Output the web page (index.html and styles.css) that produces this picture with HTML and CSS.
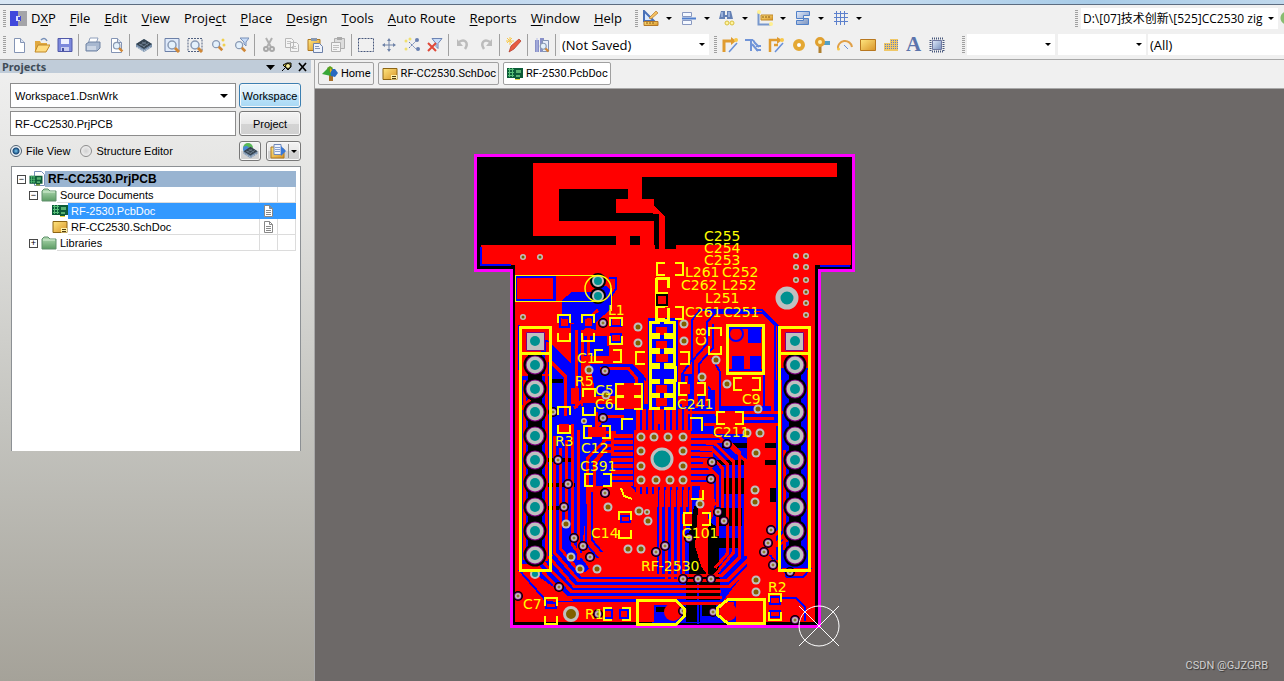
FILE: index.html
```html
<!DOCTYPE html>
<html lang="en">
<head>
  <meta charset="UTF-8" />
  <meta name="viewport" content="width=device-width, initial-scale=1.0"/>
  <title>DXP - RF-2530.PcbDoc</title>
  <link rel="stylesheet" href="styles.css">
</head>
<body>
  <!-- shared icons -->
  <svg class="defs" aria-hidden="true">
    <defs>
      <linearGradient id="gold" x2="1" y2="1"><stop offset="0" stop-color="#ffe680"/><stop offset="1" stop-color="#d89428"/></linearGradient>
      <linearGradient id="steel" x2="1" y2="1"><stop offset="0" stop-color="#dfe9fb"/><stop offset="1" stop-color="#7890bc"/></linearGradient>
      <linearGradient id="green" x2="0" y2="1"><stop offset="0" stop-color="#b4dcb4"/><stop offset="1" stop-color="#5c9c64"/></linearGradient>
      <symbol id="i-lens" viewBox="0 0 16 16"><circle cx="7" cy="7" r="4" fill="#e4f1fc" stroke="#8a9ab4" stroke-width="1.5"/><path d="M10 10l4 4" stroke="#d08838" stroke-width="3"/></symbol>
      <symbol id="i-page" viewBox="0 0 16 16"><path d="M3.500 1.500h6l4 4v10h-10z" fill="#fff" stroke="#8494b4"/><path d="M9.500 1.500v4h4" fill="#dce4f2" stroke="#8494b4"/></symbol>
      <symbol id="i-chip" viewBox="0 0 16 16"><path d="M0 7l8-5 8 5v3l-8 5-8-5z" fill="#7890ac"/><path d="M0 7l8-5 8 5-8 5z" fill="#34424e"/><path d="M3 7l6 3M6 5l6 3M4 8l6-3M7 10l6-4" stroke="#76889a" stroke-width=".8"/><path d="M1 10l7 4 7-4" stroke="#dce6ee" stroke-dasharray="1 1" fill="none"/></symbol>
      <symbol id="i-pcb" viewBox="0 0 16 16"><path d="M0 2h16v10h-3v2H8v-2H0z" fill="#0c5c38"/><path d="M1 3.500h6M1 6.500h6M1 9.500h6M2.500 2v9M5.500 2v9" stroke="#58c078"/><path d="M9 4h5v3H9zM9 9h4v2H9z" fill="#58b070"/><path d="M8 13.500h5" stroke="#e8d840"/></symbol>
      <symbol id="i-sch" viewBox="0 0 16 16"><path d="M1 2.500h14v11H1z" fill="url(#gold)" stroke="#8c6414"/><path d="M9 9h6v4.500H9z" fill="#fff0a8"/><path d="M10 10.500h4M10 12.500h4" stroke="#503c10"/></symbol>
      <symbol id="i-folder" viewBox="0 0 16 16"><path d="M1 4l2-2h4l2 2h6v10H1z" fill="url(#green)" stroke="#60906c"/><path d="M2 5h12" stroke="#d8f0d8"/></symbol>
      <symbol id="i-doc" viewBox="0 0 10 12"><path d="M.500.500h5l3 3v8h-8zM5.500.500v3h3M2 5.500h5M2 7.500h5M2 9.500h5" fill="#fff" stroke="#888"/></symbol>
    </defs>
  </svg>

  <div class="titlebar"></div>

  <header class="toolbars">
    <div class="bar">
      <span class="grip"></span>
      <svg class="logo" viewBox="0 0 17 17"><path d="M0 1h9v5h2v5H9v5H0z" fill="#4048dc"/><path d="M8 1h9v15H8v-5h3V6H8z" fill="#a4a4a8"/><path d="M6 6h4v5H6z" fill="#d8dcff"/><path d="M8 7h3v3H8z" fill="#4048dc"/></svg>
      <nav class="menu">
        <button>D<u>X</u>P</button>
        <button><u>F</u>ile</button>
        <button><u>E</u>dit</button>
        <button><u>V</u>iew</button>
        <button>Proje<u>c</u>t</button>
        <button><u>P</u>lace</button>
        <button><u>D</u>esign</button>
        <button><u>T</u>ools</button>
        <button><u>A</u>uto Route</button>
        <button><u>R</u>eports</button>
        <button><u>W</u>indow</button>
        <button><u>H</u>elp</button>
      </nav>
      <span class="grip"></span>
      <div class="drops">
        <button aria-label="Utilities"><svg viewBox="0 0 16 16"><path d="M1 1v10h10z" fill="#d8e8ff" stroke="#4870b8" stroke-width="2"/><path d="M6 8l7-7 2 2-7 6z" fill="#f4c060" stroke="#b47828" stroke-width=".7"/><path d="M1 11.500h14v4H1z" fill="url(#gold)" stroke="#b47828"/><path d="M4 12v2M7 12v2M10 12v2" stroke="#885818"/></svg></button>
        <button aria-label="Align"><svg viewBox="0 0 16 16"><path d="M1.500 2.500h9v4h-9zM1.500 10.500h9v4h-9z" fill="#f4f8ff" stroke="#8898c0"/><path d="M1 8.500h14" stroke="#5080d0" stroke-width="2"/></svg></button>
        <button aria-label="Find selections"><svg viewBox="0 0 16 16"><path d="M2 1h4v4h2V1h4l2 8H8V7H6v2H0z" fill="#6480b4"/><path d="M3 2v5M10 2v5" stroke="#c8dcff"/><circle cx="8" cy="13" r="2" fill="#fff4a0" stroke="#d8c040"/><circle cx="13" cy="13" r="2" fill="#fff4a0" stroke="#d8c040"/></svg></button>
        <button aria-label="Dimensions"><svg viewBox="0 0 16 16"><path d="M1.500 2v12.500H14" fill="none" stroke="#7898cc" stroke-width="2"/><path d="M4 5h12v5H4z" fill="url(#gold)" stroke="#c08828"/><path d="M6 6v2M9 6v2M12 6v2" stroke="#885818"/><circle cx="2" cy="2" r="2" fill="#fff090"/><circle cx="14" cy="14" r="2" fill="#fff090"/></svg></button>
        <button aria-label="Rooms"><svg viewBox="0 0 16 16"><path d="M1.500 1.500h13v4h-6v3h-7zM8.500 8.500h5v6h-12v-4h7z" fill="url(#steel)" stroke="#5080c8"/></svg></button>
        <button aria-label="Grids"><svg viewBox="0 0 16 16"><path d="M3.500 1v14M7.500 1v14M11.500 1v14M1 3.500h14M1 7.500h14M1 11.500h14" stroke="#5c80cc"/></svg></button>
      </div>
      <div class="path-box">
        <span class="grip"></span>
        <span class="combo path"><select aria-label="Document path"><option>D:\[07]技术创新\[525]CC2530 zig</option></select></span>
        <span class="go"></span>
      </div>
    </div>

    <div class="bar">
      <span class="grip"></span>
      <div class="tools">
        <button aria-label="New"><svg viewBox="0 0 16 16"><use href="#i-page"/></svg></button>
        <button aria-label="Open"><svg viewBox="0 0 16 16"><path d="M1 4h5l1 2h6v8H1z" fill="#e0a840"/><path d="M1 15l3-7h12l-4 7z" fill="#ffdc80" stroke="#c08828"/><path d="M7 3c3-3 5-1 6 1" fill="none" stroke="#7890b8" stroke-width="1.500"/></svg></button>
        <button aria-label="Save"><svg viewBox="0 0 16 16"><path d="M1 1.500h14v13H1z" fill="#7c88dc" stroke="#5058a8"/><path d="M4 2h8v5H4z" fill="#eef0ff"/><path d="M4 10h8v4H4z" fill="#c8ccf0"/><path d="M5 11h2v3H5z" fill="#4450a0"/></svg></button>
        <i class="sep"></i>
        <button aria-label="Print"><svg viewBox="0 0 16 16"><path d="M5 1h8l-2 6H3z" fill="#fff" stroke="#90a0bc"/><path d="M1 7l3-2h11v6l-3 3H1z" fill="#a8b8d0" stroke="#7084a4"/><path d="M2 10h9M2 12h9" stroke="#f0f4fa"/></svg></button>
        <button aria-label="Print preview"><svg viewBox="0 0 16 16"><use href="#i-page"/><use href="#i-lens" x="3" y="3" width="13" height="13"/></svg></button>
        <i class="sep"></i>
        <button aria-label="Devices"><svg viewBox="0 0 16 16"><use href="#i-chip"/></svg></button>
        <i class="sep"></i>
        <button aria-label="Fit document"><svg viewBox="0 0 16 16"><path d="M1 1.500h14v13H1z" fill="#dfeafa" stroke="#6c80a8"/><use href="#i-lens" x="1" y="1" width="16" height="16"/></svg></button>
        <button aria-label="Zoom area"><svg viewBox="0 0 16 16"><path d="M1 1.500h14v13H1z" fill="none" stroke="#506080" stroke-dasharray="2 1"/><use href="#i-lens" x="1" y="1" width="16" height="16"/></svg></button>
        <button aria-label="Zoom selected"><svg viewBox="0 0 16 16"><use href="#i-lens" width="14" height="14" y="1"/><circle cx="13" cy="3" r="1.500" fill="#f0d050"/><circle cx="14" cy="8" r="1.500" fill="#f0d050"/></svg></button>
        <button aria-label="Zoom filtered"><svg viewBox="0 0 16 16"><path d="M7 1h9l-3 4v4l-2-2V5z" fill="#c8dcf8" stroke="#7890b8"/><use href="#i-lens" y="2" width="14" height="14"/></svg></button>
        <i class="sep"></i>
        <button aria-label="Cut"><svg viewBox="0 0 16 16"><path d="M5 1l5 9M11 1L6 10" stroke="#b0b0b0" stroke-width="2"/><circle cx="5" cy="12" r="2" fill="none" stroke="#a8a8a8" stroke-width="2"/><circle cx="11" cy="12" r="2" fill="none" stroke="#a8a8a8" stroke-width="2"/></svg></button>
        <button aria-label="Copy"><svg viewBox="0 0 16 16"><path d="M1.500 1.500h6l2 2v7h-8zM6.500 5.500h6l2 2v7h-8z" fill="#f4f4f4" stroke="#b8b8b8"/><path d="M3 4.500h4M3 6.500h3M8 9.500h4M8 11.500h5" stroke="#c4c4c4"/></svg></button>
        <button aria-label="Paste"><svg viewBox="0 0 16 16"><path d="M1 2.500h12v11H1z" fill="url(#gold)" stroke="#b07820"/><path d="M4 1h6v3H4z" fill="#8898b0"/><path d="M6.500 6.500h6l3 3v6h-9z" fill="#eef3fc" stroke="#6c80a8"/><path d="M8 9.500h4M8 11.500h5" stroke="#8898b8"/></svg></button>
        <button aria-label="Rubber stamp"><svg viewBox="0 0 16 16"><path d="M4.500 1.500h10v10h-10z" fill="#ddd" stroke="#b0b0b0"/><path d="M1.500 5.500h9v9h-9z" fill="#f4f4f4" stroke="#b0b0b0"/><path d="M7 0h5v3H7z" fill="#aaa"/><path d="M3 8.500h6M3 10.500h6M3 12.500h4" stroke="#c0c0c0"/></svg></button>
        <i class="sep"></i>
        <button aria-label="Select area"><svg viewBox="0 0 16 16"><path d="M.500 1.500h15v13H.500z" fill="none" stroke="#48587c" stroke-dasharray="2 1"/></svg></button>
        <button aria-label="Move"><svg viewBox="0 0 16 16"><path d="M8 2v12M2 8h12" stroke="#7084a8"/><path d="M8 1L6 4h4zM8 15l-2-3h4zM1 8l3-2v4zM15 8l-3-2v4z" fill="#7084a8"/></svg></button>
        <button aria-label="Deselect"><svg viewBox="0 0 16 16"><path d="M5 5l7 7M5 11l7-7" stroke="#6880b0" stroke-dasharray="2 1"/><circle cx="13" cy="3" r="2" fill="#6880b0"/><circle cx="14" cy="12" r="2" fill="#6880b0"/><circle cx="2" cy="4" r="1.500" fill="#f0e070"/><circle cx="6" cy="2" r="1.500" fill="#f0e070"/><circle cx="2" cy="12" r="1.500" fill="#f0e070"/></svg></button>
        <button aria-label="Clear filter"><svg viewBox="0 0 16 16"><path d="M5 1.500h10l-4 5v5l-2-2v-3z" fill="#c8dcf8" stroke="#6c84b4"/><path d="M1 6l8 8M9 6l-8 8" stroke="#e04838" stroke-width="2"/></svg></button>
        <i class="sep"></i>
        <button aria-label="Undo"><svg viewBox="0 0 16 16"><path d="M4 5c6-4 10 1 6 7" fill="none" stroke="#bcbcbc" stroke-width="2.500"/><path d="M2 2v7h6z" fill="#bcbcbc"/></svg></button>
        <button aria-label="Redo"><svg viewBox="0 0 16 16"><path d="M12 5C6 1 2 6 6 12" fill="none" stroke="#bcbcbc" stroke-width="2.500"/><path d="M14 2v7H8z" fill="#bcbcbc"/></svg></button>
        <i class="sep"></i>
        <button aria-label="Highlight"><svg viewBox="0 0 16 16"><path d="M3 15l2-6 8-7 2 2-7 8z" fill="#e85c40" stroke="#b03828" stroke-width=".700"/><path d="M4 0v8M0 4h8M1 1l5 5M6 1L1 6" stroke="#f8c848"/></svg></button>
        <i class="sep"></i>
        <button aria-label="Browse components"><svg viewBox="0 0 16 16"><path d="M1 3h4v12H1zM6 1h4v14H6z" fill="#8890c8"/><path d="M3 1v14" stroke="#b8c0e8"/><path d="M8.500 3.500h6v11h-6z" fill="#e8eefa" stroke="#8494b4"/><use href="#i-lens" x="4" y="4" width="12" height="12"/></svg></button>
        <i class="sep"></i>
      </div>
      <span class="combo mask"><select aria-label="Saved filter"><option>(Not Saved)</option></select></span>
      <span class="grip"></span>
      <div class="tools">
        <button aria-label="Route"><svg viewBox="0 0 16 16"><path d="M2 15V4h8" fill="none" stroke="#e09c30" stroke-width="3"/><path d="M9 0l5 4-5 4z" fill="#e09c30"/><path d="M7 15l8-9" stroke="#6890d8" stroke-width="1.500"/><circle cx="14" cy="3" r="2" fill="#f8c848"/></svg></button>
        <button aria-label="Differential pair"><svg viewBox="0 0 16 16"><path d="M0 3h8M6 2v12M8 3l2 3 4 4M7 7l6 7M11 9h5M11 13h5" fill="none" stroke="#7094d8" stroke-width="2"/></svg></button>
        <button aria-label="Multi route"><svg viewBox="0 0 16 16"><path d="M2 15V3h8M6 8h4" fill="none" stroke="#e09c30" stroke-width="2.500"/><path d="M9 0l5 3-5 4z" fill="#e09c30"/><path d="M7 15l8-9" stroke="#6890d8" stroke-width="1.500"/><circle cx="14" cy="3" r="2" fill="#f8c848"/></svg></button>
        <button aria-label="Pad"><svg viewBox="0 0 16 16"><circle cx="8" cy="8" r="4" fill="#fff" stroke="#e4a834" stroke-width="4"/></svg></button>
        <button aria-label="Via"><svg viewBox="0 0 16 16"><path d="M8 6h8" stroke="#50a0c8" stroke-width="4"/><path d="M6 8v8" stroke="#b08030" stroke-width="3"/><circle cx="6" cy="5" r="3.500" fill="#fff0b0" stroke="#e0a030" stroke-width="3"/></svg></button>
        <button aria-label="Arc"><svg viewBox="0 0 16 16"><path d="M1 12A7 7 0 0 1 15 10" fill="none" stroke="#e0a048" stroke-width="2"/><path d="M7 8l4 4" stroke="#6890d8"/><circle cx="1.500" cy="12" r="1.500" fill="#f8c848"/></svg></button>
        <button aria-label="Fill"><svg viewBox="0 0 16 16"><path d="M.500 2.500h15v11H.500z" fill="url(#gold)" stroke="#b87820"/></svg></button>
        <button aria-label="Polygon pour"><svg viewBox="0 0 16 16"><path d="M1 6h6V2h8v12H1z" fill="#f0c868"/><path d="M2 7.500h13M2 9.500h13M2 11.500h13M8 5.500h7M8 3.500h7" stroke="#6080c8" stroke-dasharray="1 1"/></svg></button>
        <button class="letter" aria-label="String">A</button>
        <button aria-label="Component"><svg viewBox="0 0 16 16"><path d="M3 1.500h11M3 14.500h11M1.500 3v11M14.500 3v11" stroke="#48587c" stroke-width="2" stroke-dasharray="1 1"/><path d="M3.500 3.500h9v9h-9z" fill="url(#steel)" stroke="#7078a0"/></svg></button>
      </div>
      <span class="grip last"></span>
      <span class="combo small"><select aria-label="Net"><option></option></select></span>
      <span class="combo small"><select aria-label="Component filter"><option></option></select></span>
      <input class="all" aria-label="Filter" value="(All)">
    </div>
  </header>

  <div class="workspace">
    <aside class="panel">
      <h2>
        <span>Projects</span>
        <button aria-label="Panel menu"><svg viewBox="0 0 11 10"><path d="M1 3h9L5.500 8z"/></svg></button>
        <button aria-label="Pin"><svg viewBox="0 0 11 10"><path d="M1 9l3-3M2 3l4-2h4v4L7 8z" stroke="#000" fill="#e8d840"/><circle cx="7" cy="4" r="2.500" fill="#f8f0a0" stroke="#000"/></svg></button>
        <button aria-label="Close panel"><svg viewBox="0 0 11 10"><path d="M2 1l7 8M9 1L2 9" stroke="#000" stroke-width="1.700"/></svg></button>
      </h2>
      <div class="panel-form">
        <span class="combo field"><select aria-label="Workspace file"><option>Workspace1.DsnWrk</option></select></span>
        <button class="btn hot">Workspace</button>
        <input class="field" aria-label="Project file" value="RF-CC2530.PrjPCB">
        <button class="btn">Project</button>
        <div class="views">
          <label><input type="radio" name="view" checked>File View</label>
          <label><input type="radio" name="view">Structure Editor</label>
        </div>
        <div class="pair">
          <button class="btn icon" aria-label="Compile"><svg viewBox="0 0 16 16"><circle cx="6" cy="5" r="5" fill="#58b858"/><circle cx="4" cy="6" r="3" fill="#4888d8"/><use href="#i-chip" x="1" y="2" width="15" height="14"/></svg></button>
          <button class="btn icon wide" aria-label="Project options"><svg viewBox="0 0 16 16"><path d="M1 4h6l1 2h6v9H1z" fill="url(#gold)" stroke="#b07820"/><path d="M4 1.500h7v10H4z" fill="#eef4ff" stroke="#7088b8"/><path d="M5 4.500h5M5 6.500h5M5 8.500h5" stroke="#88a0d0"/><path d="M11 3l5 5-5 5z" fill="#3878d8"/></svg><i></i><b></b></button>
        </div>
      </div>

      <ul class="tree">
        <li class="root"><span class="box">−</span><svg viewBox="0 0 16 16"><path d="M5.500.500h7l3 3v11h-10z" fill="#fff" stroke="#7890b8"/><use href="#i-pcb" y="3" width="14" height="13"/></svg><div class="row"><span>RF-CC2530.PrjPCB</span></div></li>
        <li class="l1"><span class="box">−</span><svg viewBox="0 0 16 16"><use href="#i-folder"/></svg><div class="row"><span>Source Documents</span><i></i><i></i></div></li>
        <li class="l2 on"><svg viewBox="0 0 16 16"><use href="#i-pcb"/></svg><div class="row"><span>RF-2530.PcbDoc</span><i><svg viewBox="0 0 10 12"><use href="#i-doc"/></svg></i><i></i></div></li>
        <li class="l2"><svg viewBox="0 0 16 16"><use href="#i-sch"/></svg><div class="row"><span>RF-CC2530.SchDoc</span><i><svg viewBox="0 0 10 12"><use href="#i-doc"/></svg></i><i></i></div></li>
        <li class="l1"><span class="box">+</span><svg viewBox="0 0 16 16"><use href="#i-folder"/></svg><div class="row"><span>Libraries</span><i></i><i></i></div></li>
      </ul>
    </aside>

    <main class="editor">
      <nav class="tabs">
        <button><svg viewBox="0 0 16 16"><path d="M7 7h4v8H7z" fill="#a87028"/><path d="M0 8l6-6 3 3v5z" fill="#38a838"/><path d="M8 3h5l3 4-3 4-4-1z" fill="#2868c0"/><path d="M5 2l3-2 3 2-3 5z" fill="#58a020"/><path d="M8 2l2 2-2 3z" fill="#e8b020"/></svg>Home</button>
        <button><svg viewBox="0 0 16 16"><use href="#i-sch"/></svg>RF-CC2530.SchDoc</button>
        <button class="active"><svg viewBox="0 0 16 16"><use href="#i-pcb"/></svg>RF-2530.PcbDoc</button>
      </nav>

      <div class="canvas">
        <svg class="board" viewBox="470 150 390 500" role="img" aria-label="RF-2530 circuit board">
          <defs>
            <g id="pad"><circle r="11.500" fill="#000"/><circle r="9.500" fill="#800080"/><circle r="8.500" fill="#c0c0c0"/><circle r="5" fill="#009090"/></g>
            <g id="via"><circle r="4.500" fill="#c0c0c0"/><circle r="2.500" fill="#806000"/></g>
            <g id="dot"><circle r="5" fill="#000"/><circle r="3.700" fill="#800080"/><circle r="3" fill="#c0c0c0"/><path d="M-1.500 0h3M0-1.500v3" stroke="#806000"/></g>
            <g id="mini"><circle r="3" fill="#c0c0c0"/><circle r="1.500" fill="#806000"/></g>
            <path id="cap" d="M-5-6h-8V6h8M5-6h8V6h-8"/>
          </defs>

          <!-- outline and antenna -->
          <path class="edge" d="M475.500 155.500h378v115H819V626H511.500V270.500h-36z"/>
          <g class="red">
            <path d="M533 163h304v14H642v22h12v7l11 10v33h-6v-33l-7-3h-36v-14h12v-10h-69v32h95v28h-14v-13h-10v13h-14v-13h-83z"/>
            <path d="M481 245h370v20h-36v357H515V265h-34z"/>
          </g>
          <path d="M665 216h11v33h-11zM655 214h4v35h-4z"/>
          <path class="bl" d="M480.500 247v18h30M820 265.500h30"/>

          <!-- bottom layer -->
          <g class="blue">
            <path d="M562 320v-20l10-8h24v-6h10l6 6v16l-16 14v8z"/>
            <path d="M541 340h6l24 24v50h-19v-40h-11z"/>
            <path d="M519 376h32v188h-32z"/>
            <path d="M571 324h13v64h-13z"/>
            <path d="M577 336h32v20h-32zM590 364h42l12 12v34h-12l-14-14h-22z"/>
            <path d="M551 404h49v56l-12 8v20l10 70-12 14-20-6-15-12z"/>
            <path d="M590 404h124v90h-96l-34-6V440z"/>
            <path d="M648 318h30v90h-30zM682 374h10v52h-10zM700 390h18v36h-18z"/>
            <path d="M781 368h27v200h-27z"/>
            <path d="M657 488h54l8 24v70h-62z"/>
            <path d="M652 600h84v23h-84z"/>
            <path d="M706 434h46l-2 120-26 30h-24z"/>
            <path d="M720 406h60v20h-64z"/>
            <path d="M545 556h14l24 20h140l25-22v14l-28 37H580l-44-30z"/>
            <path d="M732 356h12v14h-12zM750 356h11v14h-11zM748 329h13v14h-13z"/>
          </g>
          <g class="black">
            <path d="M528 352h14v210h-14zM789 352h12v210h-12zM694 506h16l-4 14 13 8v56h-30v-50z"/>
            <path d="M722 478h24v16h-24zM716 508h26v18h-26zM716 538h24v10h-24zM686 578h34v22h-34zM686 602h14v20h-14zM702 602h14v14h-14zM656 607h20v5h-20z"/>
            <path d="M551 379h12v4h-12zM545 458h26v4h-26zM545 483h30v4h-30zM545 506h20v4h-20zM612 574h92v2h-92zM722 443h60v5h-60zM712 460h66v5h-66zM770 488h10v14h-10z"/>
          </g>
          <path class="red" d="M700 484h10l6 20-8 10v62l-7-10-6-20zM747 430h18v166h-18zM589 486h42l8 10h16v75h-64l-10-14z"/>

          <!-- blue tracks -->
          <g class="bl">
            <path d="M576 320h14l-10 14v74M606 303l10-14V278h-7M520 420l10-10M519 325v45"/>
            <path d="M605 371h27l9 10v20M597 366h33l16 14M693 408V360l14-16v-22l8-9h48l12 12v100"/>
            <path d="M699 408V364l14-16v-24M682 392v-18l10-14v-40l8-10h62l16 16v84"/>
            <path d="M712 358l8 14v42h48M690 414h92M700 420h80M706 384l6 8v16M764 330v88"/>
            <path d="M592 492v48l10 12M586 488v56l12 14M519 570l28 32h130"/>
            <path d="M770 555l17 22h16l8-9M780 598h16l9 9v14M708 312h46M728 328h36v42h-36zM698 580v44"/>
            <path d="M516 277h38v23h-38zM555 276v25M777 380v180"/>
          </g>

          <!-- red tracks -->
          <g class="rd">
            <path d="M554 436v116l24 28h150l21-21V452"/>
            <path d="M560 448v100l22 27h140l17-17V452l-11-11h-30"/>
            <path d="M548 556l26 30h156l22-22M543 562l28 29h150M534 562l32 35h156M526 570l30 33h178"/>
            <path d="M546 355v206M519 372l10-10M565 416v-40l-18-18v-16M566 440v84M572 424v120l10 14M578 430v130"/>
            <path d="M576 330v78M582 330v76M588 336v20M583 324l15-14M608 332v14M600 368h28l8 10v26"/>
            <path d="M696 408V362l14-16v-22l6-8h46l10 10v86M703 390l6-12M712 360l4 12v44M688 412h95M704 424h76M726 418h48"/>
            <path d="M706 436h12l27 24v96M706 443h8l19 18v92l-18 22M700 449h12l15 15v90l-12 14M700 455h10l12 13v40M704 462l13 14v60"/>
            <path d="M614 439h-8l-19 20v45M614 445h-6l-14 17v24M614 451h-10l-10 14v30M596 412v20h20M592 432l14-16h18M574 408l14-12"/>
            <path d="M660 490v86M666 490v90M672 490v90M678 490v90M684 490v40l-1 50M690 490v30"/>
            <path d="M683 395v12M712 484v30l-8 20M524 380v180M520 410l10-10M780 380v150l-10 10M808 370v180M784 450v100M775 545l12-14M764 552l24-12M784 575l-12-15"/>
            <path d="M658 404v20M686 376v30M706 380v26"/>
          </g>

          <!-- CC2530 -->
          <path class="comb" d="M636 420h56M636 496h56"/>
          <path class="comb side" d="M622 434v54M702 434v54"/>
          <path class="red" d="M634 430h57v57h-57z"/>
          <path class="red" d="M560 319h9v8h-9zM584 319h9v8h-9zM612 335h9v8h-9zM612 322h9v8h-9zM559 424h10v8h-10zM583 390h12v14h-12zM656 327h11v8h-11zM656 341h11v8h-11zM656 354h12v8h-12zM656 385h11v8h-11zM656 398h11v8h-11zM730 332h16v12h-16zM682 514h10v10h-10zM638 604h16v18h-16zM748 604h14v18h-14zM617 383h24v26h-24zM588 427h18v10h-18zM680 384h10v10h-10zM698 384h10v10h-10zM718 413h24v10h-24z"/>
          <g class="red round"><circle cx="673" cy="612" r="9"/><circle cx="728" cy="612" r="9"/></g>
          <path class="bl" d="M546 603h10v5h-10zM604 610h8v8h-8zM620 610h8v8h-8zM770 597h10v7h-10zM770 611h10v6h-10zM621 516h9v6h-9zM560 317h9v10h-9zM584 317h9v10h-9zM584 404h10v8h-10zM611 318h10v8h-10zM611 334h10v8h-10z"/>
          <circle class="round" cx="736" cy="334" r="7" fill="none" stroke="#00f" stroke-width="2"/>

          <!-- pads and vias -->
          <g class="round">
            <use href="#pad" x="535" y="365"/><use href="#pad" x="535" y="389"/><use href="#pad" x="535" y="412"/><use href="#pad" x="535" y="436"/><use href="#pad" x="535" y="460"/><use href="#pad" x="535" y="483"/><use href="#pad" x="535" y="507"/><use href="#pad" x="535" y="531"/><use href="#pad" x="535" y="555"/>
            <use href="#pad" x="795" y="365"/><use href="#pad" x="795" y="389"/><use href="#pad" x="795" y="412"/><use href="#pad" x="795" y="436"/><use href="#pad" x="795" y="460"/><use href="#pad" x="795" y="483"/><use href="#pad" x="795" y="507"/><use href="#pad" x="795" y="531"/><use href="#pad" x="795" y="555"/>
            <g fill="#c0c0c0" stroke="#800080"><path d="M526.500 332.500h18v18h-18zM785.500 332.500h18v18h-18z"/></g>
            <g fill="#009090"><circle cx="535" cy="341" r="5"/><circle cx="795" cy="341" r="5"/></g>
            <g fill="#009090" stroke="#c0c0c0"><circle cx="787" cy="298" r="9" stroke-width="5"/><circle cx="662" cy="459" r="10" stroke-width="3"/><circle cx="535" cy="574" r="4" stroke-width="2"/></g>
            <g fill="#000"><circle cx="598" cy="281" r="8"/><circle cx="598" cy="296" r="8"/></g>
            <g fill="#009090" stroke="#c0c0c0" stroke-width="2"><circle cx="598" cy="281" r="5"/><circle cx="598" cy="296" r="5"/></g>
            <circle cx="571" cy="614" r="6.500" fill="#806000" stroke="#c0c0c0" stroke-width="3"/>

            <use href="#mini" x="523" y="257"/><use href="#mini" x="540" y="257"/><use href="#mini" x="523" y="317"/>
            <use href="#mini" x="796" y="256"/><use href="#mini" x="806" y="256"/><use href="#mini" x="796" y="267"/><use href="#mini" x="806" y="267"/><use href="#mini" x="796" y="280"/><use href="#mini" x="806" y="280"/><use href="#mini" x="806" y="292"/><use href="#mini" x="806" y="303"/><use href="#mini" x="806" y="315"/><use href="#mini" x="584" y="421"/><use href="#mini" x="647" y="512"/>

            <use href="#via" x="638" y="327"/><use href="#via" x="638" y="343"/><use href="#via" x="684" y="324"/><use href="#via" x="684" y="341"/><use href="#via" x="716" y="360"/><use href="#via" x="702" y="377"/><use href="#via" x="727" y="384"/><use href="#via" x="758" y="409"/><use href="#via" x="589" y="370"/><use href="#via" x="606" y="395"/>
            <use href="#via" x="641" y="437"/><use href="#via" x="654" y="437"/><use href="#via" x="668" y="437"/><use href="#via" x="683" y="437"/><use href="#via" x="641" y="451"/><use href="#via" x="641" y="466"/><use href="#via" x="683" y="451"/><use href="#via" x="683" y="466"/><use href="#via" x="641" y="480"/><use href="#via" x="656" y="480"/><use href="#via" x="670" y="480"/><use href="#via" x="683" y="480"/>
            <use href="#via" x="747" y="433"/><use href="#via" x="760" y="433"/><use href="#via" x="756" y="453"/><use href="#via" x="755" y="490"/><use href="#via" x="755" y="502"/><use href="#via" x="756" y="580"/><use href="#via" x="756" y="592"/><use href="#via" x="700" y="504"/><use href="#via" x="608" y="507"/><use href="#via" x="639" y="511"/><use href="#via" x="648" y="521"/><use href="#via" x="628" y="549"/><use href="#via" x="641" y="549"/><use href="#via" x="566" y="524"/><use href="#via" x="571" y="557"/><use href="#via" x="580" y="569"/><use href="#via" x="597" y="569"/>

            <use href="#dot" x="603" y="323"/><use href="#dot" x="605" y="371"/><use href="#dot" x="603" y="418"/><use href="#dot" x="553" y="412"/><use href="#dot" x="558" y="460"/><use href="#dot" x="568" y="484"/><use href="#dot" x="564" y="507"/><use href="#dot" x="605" y="493"/><use href="#dot" x="574" y="538"/><use href="#dot" x="583" y="546"/><use href="#dot" x="590" y="557"/><use href="#dot" x="559" y="587"/><use href="#dot" x="518" y="596"/><use href="#dot" x="598" y="614"/><use href="#dot" x="656" y="552"/><use href="#dot" x="665" y="546"/><use href="#dot" x="689" y="538"/><use href="#dot" x="727" y="444"/><use href="#dot" x="712" y="462"/><use href="#dot" x="711" y="479"/><use href="#dot" x="718" y="512"/><use href="#dot" x="724" y="521"/><use href="#dot" x="683" y="579"/><use href="#dot" x="698" y="579"/><use href="#dot" x="711" y="579"/><use href="#dot" x="771" y="530"/><use href="#dot" x="768" y="543"/><use href="#dot" x="764" y="552"/><use href="#dot" x="773" y="565"/><use href="#dot" x="790" y="572"/><use href="#dot" x="683" y="611"/><use href="#dot" x="713" y="612"/><use href="#dot" x="795" y="620"/>
          </g>

          <!-- silkscreen -->
          <g class="silk">
            <path d="M520.500 327.500h30v243h-30zM520 353.500h31M779.500 327.500h30v243h-30zM779 353.500h31M727.500 325.500h36v48h-36z"/>
            <path d="M637.500 600.500H676l8 8v8l-8 8h-38.500zM764.500 599.500H728l-11 9v6l11 9h36.500z"/>
            <path class="fine" d="M622 430v-11h11M702 431v-13h-12M621 488l3 8 8 3M703 490v9h-12"/>
            <g class="fine">
              <use href="#cap" x="608" y="356"/><use href="#cap" x="597" y="432"/><use href="#cap" x="598" y="480"/><use href="#cap" x="629" y="390"/><use href="#cap" x="629" y="403"/><use href="#cap" x="747" y="384"/><use href="#cap" x="730" y="418"/><use href="#cap" x="692" y="389"/><use href="#cap" x="697" y="519"/><use href="#cap" x="617" y="614"/><use href="#cap" x="670" y="269"/><use href="#cap" x="670" y="313"/>
              <path d="M645 352h-9v12h9M680 352h9v12h-9"/>
              <use href="#cap" transform="translate(564 328) rotate(90)"/><use href="#cap" transform="translate(588 328) rotate(90)"/><use href="#cap" transform="translate(616 331) rotate(90)"/><use href="#cap" transform="translate(589 402) rotate(90)"/><use href="#cap" transform="translate(564 420) rotate(90)"/><use href="#cap" transform="translate(625 525) rotate(90)"/><use href="#cap" transform="translate(715 341) rotate(90)"/><use href="#cap" transform="translate(551 611) rotate(90)"/><use href="#cap" transform="translate(775 607) rotate(90)"/>
            </g>
            <path d="M660 322h-10v12h10M664 322h10v12h-10M660 337h-10v12h10M664 337h10v12h-10M660 352h-10v12h10M664 352h10v12h-10M660 367h-10v13h10M664 367h11v13h-11M660 382h-10v12h10M664 382h10v12h-10M660 396h-10v12h10M664 396h10v12h-10M656 278h12v10M656 278v42h12v-12M656 293h12M656 305h12"/>
          </g>
          <path d="M598 275.500h-82.500v25.500H598M611 288v23" fill="none" stroke="#ff0"/>
          <circle class="round" cx="598" cy="288.500" r="13" fill="none" stroke="#ff0" stroke-width="1.500"/>
          <path d="M657 295h10v10h-10z" class="red" stroke="#000" stroke-width="2"/>
          <g class="label">
            <text x="704" y="241">C255</text><text x="704" y="253">C254</text><text x="704" y="265">C253</text>
            <text x="685" y="277">L261</text><text x="722" y="277">C252</text><text x="681" y="290">C262</text><text x="722" y="290">L252</text>
            <text x="705" y="303">L251</text><text x="685" y="317">C261</text><text x="723" y="317">C251</text>
            <text x="608" y="315">L1</text><text x="577" y="363">C1</text><text x="575" y="386">R5</text><text x="595" y="395">C5</text><text x="595" y="409">C6</text>
            <text x="555" y="446">R3</text><text x="581" y="453">C12</text><text x="580" y="471">C391</text><text x="677" y="409">C241</text>
            <text x="742" y="404">C9</text><text x="713" y="437">C211</text><text x="591" y="538">C14</text><text x="682" y="538">C101</text>
            <text x="523" y="609">C7</text><text x="585" y="619">R1</text><text x="768" y="592">R2</text>
            <text transform="translate(706 346) rotate(-90)">C8</text>
            <text x="641" y="571">RF-2530</text>
          </g>
          <g class="round" fill="none" stroke="#fff"><circle cx="819" cy="626" r="20"/><path d="M799 606l40 40M839 606l-40 40"/></g>
        </svg>
        <span class="credit">CSDN @GJZGRB</span>
      </div>
    </main>
  </div>
</body>
</html>
```
FILE: styles.css
```css
* {
  box-sizing: border-box;
}
body {
  margin: 0;
  height: 100vh;
  display: flex;
  flex-direction: column;
  overflow: hidden;
  background: #f0f0f0;
  color: #000;
  font-family: "Liberation Sans", Arial, sans-serif;
  font-size: 11px;
}
button, input, select {
  font: inherit;
  color: inherit;
  margin: 0;
  padding: 0;
  border: 0;
  background: none;
}
.defs {
  position: absolute;
  width: 0;
  height: 0;
}
.titlebar {
  height: 5px;
  background: linear-gradient(90deg, #d8e6f4, #c4daf0 40%, #d4e4f4 60%, #a8cce8 85%, #c0d8ec);
  border-bottom: 1px solid #5c6c80;
}

/* toolbars */
.toolbars {
  font-family: "Open Sans", "Noto Sans CJK SC", sans-serif;
  font-size: 13px;
  border-bottom: 1px solid #a8a8a8;
  padding-bottom: 1px;
}
.bar {
  display: flex;
  align-items: center;
  height: 27px;
  padding-left: 3px;
}
.bar:first-child {
  height: 26px;
}
.grip {
  width: 3px;
  height: 17px;
  flex: none;
  margin-right: 1px;
  background: repeating-linear-gradient(#a0a0a0 0 1px, transparent 1px 2px);
}
.logo {
  width: 17px;
  height: 17px;
  margin: 0 4px 0 3px;
}
.menu {
  display: flex;
  gap: 14px;
  margin-right: 13px;
}
.menu button {
  white-space: nowrap;
}
.menu u {
  text-underline-offset: 2px;
}
.drops {
  display: flex;
}
.drops button {
  width: 38px;
  height: 18px;
  display: flex;
  align-items: center;
  gap: 7px;
  padding-left: 4px;
}
.drops svg, .tools svg {
  width: 16px;
  height: 16px;
  display: block;
}
.drops button::after, .combo::after {
  content: "";
  border: 3px solid transparent;
  border-top-color: #000;
  border-bottom: 0;
}
.path-box {
  display: flex;
  align-items: center;
  margin-left: auto;
}
.combo {
  position: relative;
  display: block;
  background: #fff;
  height: 21px;
}
.combo::after {
  position: absolute;
  right: 4px;
  top: 9px;
  pointer-events: none;
}
.combo select {
  appearance: none;
  width: 100%;
  height: 100%;
  padding-left: 2px;
  padding-right: 14px;
}
.combo.path {
  width: 197px;
  margin-left: 2px;
  font-size: 12px;
}
.go {
  width: 6px;
  height: 12px;
  background: radial-gradient(circle at 9px 6px, #88bc70 6px, transparent 7px);
}
.tools {
  display: flex;
  align-items: center;
}
.tools button {
  width: 23px;
  height: 20px;
  display: flex;
  align-items: center;
  justify-content: center;
}
.tools .letter {
  font-family: "Liberation Serif", serif;
  font-size: 21px;
  font-weight: bold;
  color: #5c74ac;
}
.sep {
  width: 5px;
  height: 22px;
  background: linear-gradient(#a0a0a0, #a0a0a0) center / 1px 100% no-repeat;
}
.mask {
  width: 149px;
  margin: 0 5px 0 2px;
}
.last {
  margin-left: 14px;
}
.small {
  width: 88px;
  margin: 0 2px 0 1px;
}
.all {
  flex: 1;
  min-width: 0;
  height: 21px;
  padding-left: 2px;
  background: #fff;
}

/* projects panel */
.workspace {
  flex: 1;
  display: flex;
  min-height: 0;
}
.panel {
  width: 315px;
  flex: none;
  padding-right: 3px;
  border-right: 1px solid #a8a8a8;
  background: linear-gradient(#f0f0f0, #e4e4e2 20%, #c4c4bf 58%, #a5a299);
}
.panel h2 {
  display: flex;
  align-items: center;
  gap: 5px;
  height: 13px;
  margin: 0;
  padding: 0 3px 0 2px;
  background: #c0ccd9;
  color: #404c58;
  font: bold 11px/13px "Noto Sans", sans-serif;
}
.panel h2 span {
  flex: 1;
}
.panel h2 svg {
  display: block;
  width: 11px;
  height: 10px;
}
.panel-form {
  display: grid;
  grid-template-columns: 1fr 62px;
  gap: 3px;
  padding: 10px 10px 0;
}
.field {
  width: 226px;
  height: 25px;
  border: 1px solid #8c8c8c;
  background: #fff;
  padding: 0 4px;
}
.combo.field {
  padding: 0;
}
.combo.field select {
  padding-left: 4px;
}
.combo.field::after {
  top: 10px;
  right: 7px;
  border-width: 4px 4px 0;
}
.btn {
  height: 25px;
  border: 1px solid #787878;
  border-radius: 3px;
  background: linear-gradient(#f4f4f4, #e8e8e8 50%, #d4d4d4 50%, #d0d0d0);
  box-shadow: inset 0 0 0 1px #f8f8f8;
  white-space: nowrap;
}
.btn.hot {
  border-color: #3c7fb1;
  background: linear-gradient(#e8f5fc, #d8effc 50%, #bee4fa 50%, #a8d8f4);
}
.views, .pair {
  display: flex;
  align-items: center;
  height: 24px;
}
.views label {
  display: flex;
  align-items: center;
  margin-right: 10px;
}
.views input {
  appearance: none;
  width: 12px;
  height: 12px;
  margin-right: 4px;
  border: 1px solid #8c8c8c;
  border-radius: 50%;
  background: radial-gradient(#d0d0d0, #fafafa);
}
.views input:checked {
  background: radial-gradient(#78c8f0, #184878 3px, #f0f4f8 4px);
  border-color: #506070;
}
.pair {
  gap: 5px;
}
.icon {
  width: 22px;
  height: 20px;
  display: flex;
  align-items: center;
  justify-content: center;
}
.icon svg {
  width: 16px;
  height: 16px;
}
.icon.wide {
  width: 35px;
  gap: 2px;
}
.wide i {
  width: 1px;
  height: 14px;
  background: #909090;
}
.wide b {
  border: 3px solid transparent;
  border-top-color: #000;
  border-bottom: 0;
}
.tree {
  list-style: none;
  height: 285px;
  margin: 3px 10px 0 11px;
  padding: 4px 4px 0 5px;
  border: 1px solid #8c9094;
  border-bottom: 0;
  background: #fff;
}
.tree li {
  display: flex;
  align-items: center;
  height: 16px;
}
.tree li > svg {
  width: 16px;
  height: 16px;
  flex: none;
}
.box {
  width: 9px;
  height: 9px;
  margin-right: 3px;
  border: 1px solid #484848;
  font-size: 9px;
  line-height: 7px;
  text-align: center;
}
.row {
  flex: 1;
  display: flex;
  height: 16px;
  line-height: 17px;
  border-bottom: 1px solid #dcdcdc;
}
.row span {
  flex: 1;
  padding-left: 3px;
}
.row i {
  width: 18px;
  border-right: 1px solid #dcdcdc;
}
.row i:nth-child(2) {
  width: 19px;
  border-left: 1px solid #dcdcdc;
}
.row i svg {
  display: block;
  width: 10px;
  height: 12px;
  margin: 2px 0 0 4px;
}
.root .row {
  background: #99b4d1;
  border-color: #99b4d1;
  font-weight: bold;
  font-size: 12px;
}
.l1 {
  padding-left: 12px;
}
.l2 {
  padding-left: 35px;
}
.on .row {
  background: #3399ff;
  color: #fff;
}
.on .row, .on .row i {
  border-color: #3399ff;
}

/* editor */
.editor {
  flex: 1;
  min-width: 0;
  display: flex;
  flex-direction: column;
}
.tabs {
  display: flex;
  gap: 4px;
  height: 29px;
  padding: 2px 3px;
  border-bottom: 1px solid #a8a8a8;
  font-family: Roboto, sans-serif;
}
.tabs button {
  display: flex;
  align-items: center;
  gap: 3px;
  height: 23px;
  padding: 0 2px 0 3px;
  border: 1px solid #a0a0a0;
  border-radius: 2px;
}
.tabs svg {
  width: 16px;
  height: 16px;
}
.tabs .active {
  background: #fff;
}
.canvas {
  flex: 1;
  min-height: 0;
  position: relative;
  background: #6d6968;
  padding: 61px 0 0 155px;
}
.board {
  display: block;
  width: 390px;
  height: 500px;
  shape-rendering: crispEdges;
}
.edge {
  fill: #000;
  stroke: #f0f;
  stroke-width: 3;
}
.red {
  fill: #f00;
}
.blue {
  fill: #00f;
}
.bl, .rd {
  fill: none;
  stroke: #00f;
  stroke-width: 2;
}
.rd {
  stroke: #f00;
  stroke-width: 3;
}
.comb {
  fill: none;
  stroke: #f00;
  stroke-width: 22;
  stroke-dasharray: 4 2;
}
.silk {
  fill: none;
  stroke: #ff0;
  stroke-width: 3;
}
.fine {
  stroke-width: 2;
}
.round {
  shape-rendering: geometricPrecision;
}
.label {
  fill: #ff0;
  font-family: "DejaVu Sans", sans-serif;
  font-size: 14px;
}
.credit {
  position: absolute;
  right: 16px;
  bottom: 9px;
  color: #d0d0d0;
  font-family: Roboto, sans-serif;
  text-shadow: 1px 1px 1px #333;
}
```
